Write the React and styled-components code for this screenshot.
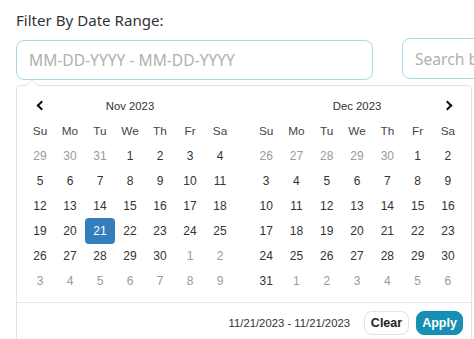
import React from 'react';
import styled, { createGlobalStyle } from 'styled-components';

const GlobalStyle = createGlobalStyle`
  body {
    margin: 0;
    background: #fff;
    font-family: 'Noto Sans', sans-serif;
    overflow: hidden;
  }
`;

const Page = styled.div`
  position: relative;
  padding: 10px 0 0 16px;
  width: 474px;
  height: 339px;
  box-sizing: border-box;
  overflow: hidden;
`;

const Label = styled.div`
  font-size: 15.1px;
  color: #333;
  line-height: 20px;
  margin-bottom: 8px;
`;

const Inputs = styled.div`
  display: flex;
  gap: 29px;
  align-items: flex-end;
`;

const Field = styled.div`
  flex: none;
  width: ${({ width }) => width}px;
  height: ${({ height }) => height}px;
  box-sizing: border-box;
  border: 1.5px solid #a3dde3;
  border-radius: 8px;
  display: flex;
  align-items: center;
  padding-left: 12px;
  font-size: 15.6px;
  color: #b0b0b0;
  white-space: nowrap;
  overflow: hidden;
  margin-bottom: ${({ lift }) => (lift ? 1 : 0)}px;
`;

const Picker = styled.div`
  position: absolute;
  top: 85px;
  left: 16px;
  width: 456px;
  height: 280px;
  box-sizing: border-box;
  background: #fff;
  border: 1px solid #e2e2e2;
  border-radius: 4px;
  font-family: 'Liberation Sans', Arial, sans-serif;
  color: #333;

  &::before,
  &::after {
    content: '';
    position: absolute;
    border-left: 7px solid transparent;
    border-right: 7px solid transparent;
  }
  &::before {
    left: 8px;
    top: -7px;
    border-bottom: 7px solid #e2e2e2;
  }
  &::after {
    left: 9px;
    top: -6px;
    border-left-width: 6px;
    border-right-width: 6px;
    border-bottom: 6px solid #fff;
  }
`;

const Calendars = styled.div`
  display: flex;
`;

const Calendar = styled.div`
  padding: 7px 8px 8px 8px;
`;

const Grid = styled.div`
  display: grid;
  grid-template-columns: repeat(7, ${({ cell }) => cell}px);
  grid-auto-rows: 25.1px;
`;

const MonthRow = styled.div`
  grid-column: 1 / span 7;
  display: flex;
  align-items: center;
  justify-content: space-between;
`;

const NavCell = styled.div`
  width: 30px;
  height: 25px;
  display: flex;
  align-items: center;
  justify-content: center;
`;

const Chevron = styled.span`
  display: inline-block;
  border: solid #111;
  border-width: 0 2px 2px 0;
  padding: 2.5px;
  transform: rotate(${({ dir }) => (dir === 'left' ? 135 : -45)}deg);
  margin-${({ dir }) => (dir === 'left' ? 'left' : 'right')}: 2px;
`;

const MonthName = styled.div`
  font-size: 11.3px;
  color: #333;
`;

const Dow = styled.div`
  display: flex;
  align-items: center;
  justify-content: center;
  font-size: 11.8px;
  color: #444;
`;

const Day = styled.div`
  display: flex;
  align-items: center;
  justify-content: center;
  font-size: 12px;
  border-radius: 4px;
  color: ${({ off, active }) => (active ? '#fff' : off ? '#9a9a9a' : '#333')};
  background: ${({ active }) => (active ? '#357ebd' : 'transparent')};
`;

const Footer = styled.div`
  border-top: 1px solid #e6e6e6;
  padding: 8px;
  display: flex;
  align-items: center;
  justify-content: flex-end;
`;

const Selected = styled.span`
  font-size: 11.3px;
  color: #333;
  margin-right: 14px;
`;

const Button = styled.button`
  width: ${({ primary }) => (primary ? 47 : 45)}px;
  height: 24px;
  box-sizing: border-box;
  border-radius: 8px;
  font-family: 'Liberation Sans', Arial, sans-serif;
  font-weight: 700;
  font-size: 12.5px;
  padding: 0;
  margin-left: ${({ primary }) => (primary ? 7 : 0)}px;
  border: 1px solid ${({ primary }) => (primary ? '#178fb3' : '#e3e3e3')};
  background: ${({ primary }) => (primary ? '#178fb3' : '#fff')};
  color: ${({ primary }) => (primary ? '#fff' : '#222')};
`;

const DAYS = ['Su', 'Mo', 'Tu', 'We', 'Th', 'Fr', 'Sa'];

const buildMonth = (year, month) => {
  const first = new Date(year, month, 1);
  const start = new Date(year, month, 1 - first.getDay());
  const cells = [];
  for (let i = 0; i < 42; i++) {
    const d = new Date(start.getFullYear(), start.getMonth(), start.getDate() + i);
    cells.push({
      n: d.getDate(),
      off: d.getMonth() !== month,
      active: d.getFullYear() === 2023 && d.getMonth() === 10 && d.getDate() === 21 && d.getMonth() === month,
    });
  }
  return cells;
};

const Month = ({ year, month, label, nav, cell }) => (
  <Calendar>
    <Grid cell={cell}>
      <MonthRow>
        <NavCell>{nav === 'left' && <Chevron dir="left" />}</NavCell>
        <MonthName>{label}</MonthName>
        <NavCell>{nav === 'right' && <Chevron dir="right" />}</NavCell>
      </MonthRow>
      {DAYS.map(d => (
        <Dow key={d}>{d}</Dow>
      ))}
      {buildMonth(year, month).map((c, i) => (
        <Day key={i} off={c.off} active={c.active}>
          {c.n}
        </Day>
      ))}
    </Grid>
  </Calendar>
);

const App = () => (
  <>
    <GlobalStyle />
    <Page>
      <Label>Filter By Date Range:</Label>
      <Inputs>
        <Field width={357} height={40}>MM-DD-YYYY - MM-DD-YYYY</Field>
        <Field width={110} height={41} lift>
          Search b
        </Field>
      </Inputs>
      <Picker>
        <Calendars>
          <Month year={2023} month={10} label="Nov 2023" nav="left" cell={30} />
          <Month year={2023} month={11} label="Dec 2023" nav="right" cell={30.3} />
        </Calendars>
        <Footer>
          <Selected>11/21/2023 - 11/21/2023</Selected>
          <Button>Clear</Button>
          <Button primary>Apply</Button>
        </Footer>
      </Picker>
    </Page>
  </>
);

export default App;
